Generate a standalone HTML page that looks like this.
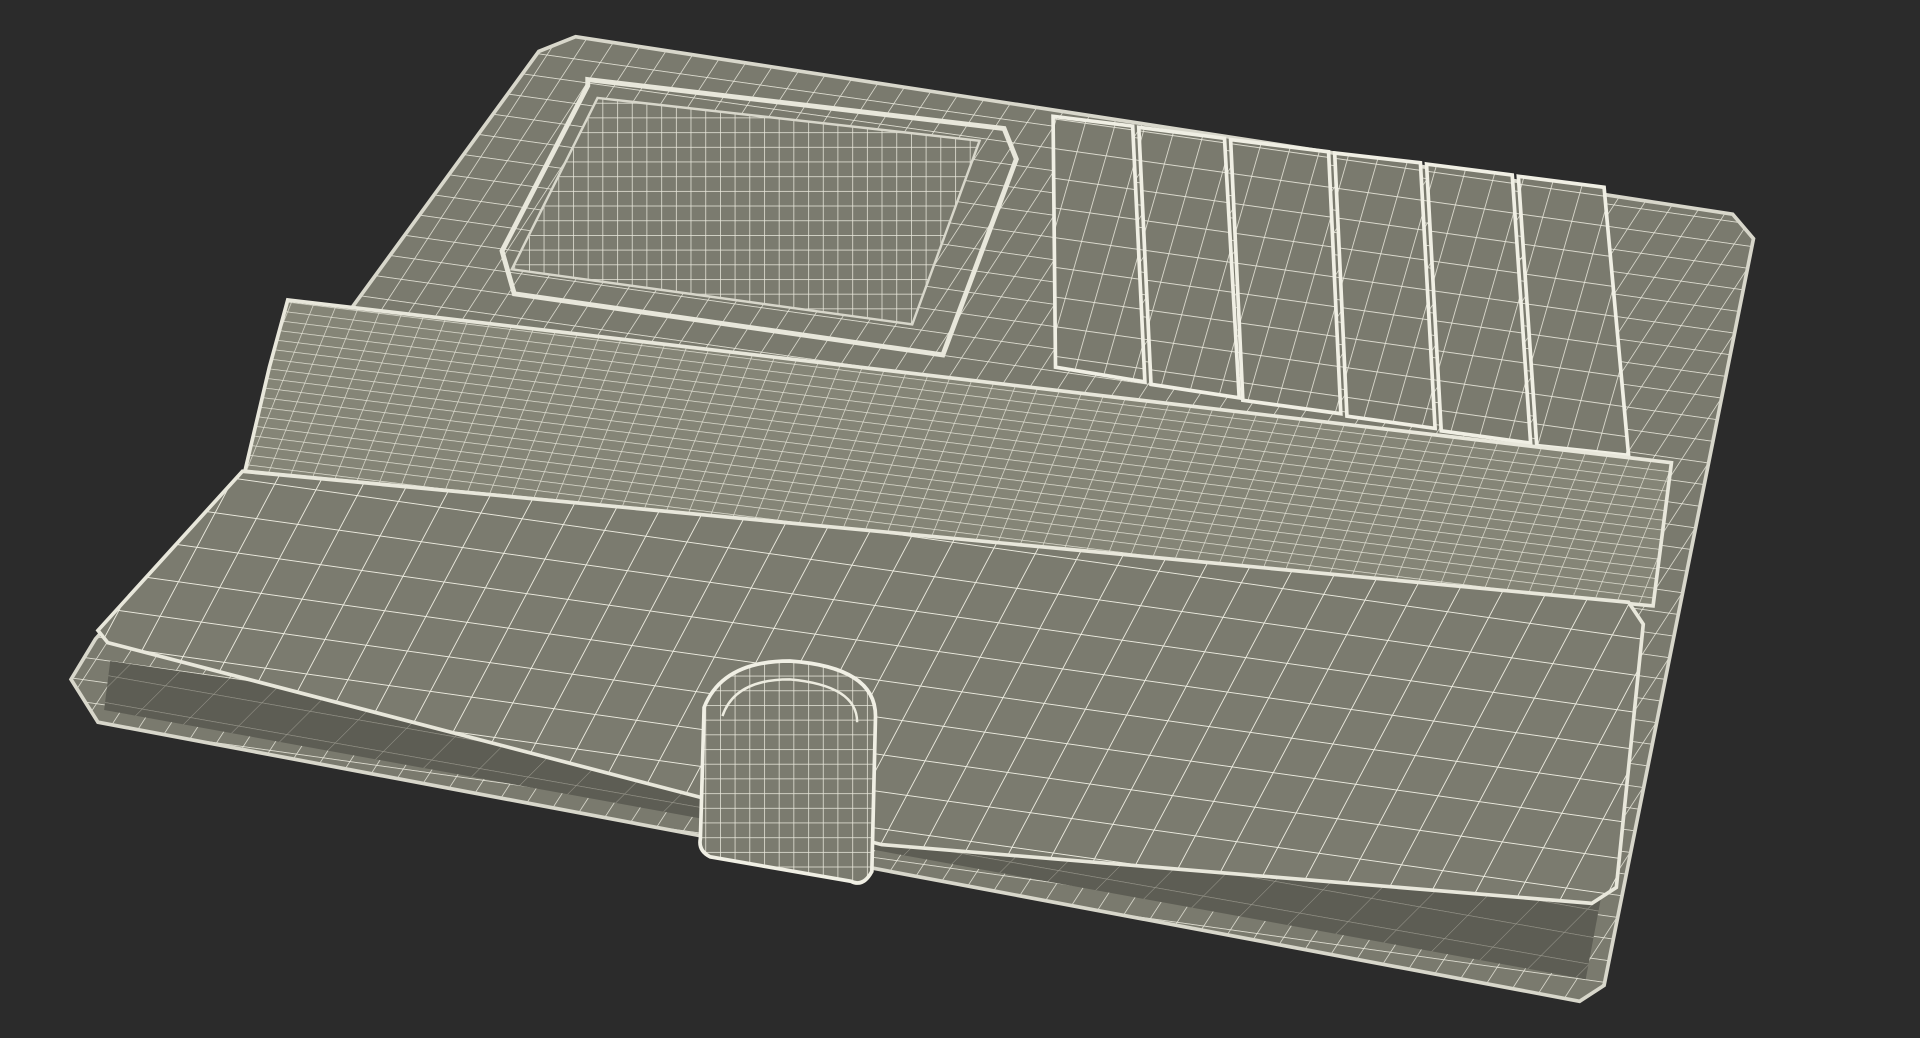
<!DOCTYPE html>
<html><head><style>html,body{margin:0;padding:0;background:#2b2b2b;overflow:hidden}svg{display:block}</style></head>
<body>
<svg width="1920" height="1038" viewBox="0 0 1568 848" preserveAspectRatio="none" xmlns="http://www.w3.org/2000/svg">
<defs>
<pattern id="g1" width="34" height="30" patternUnits="userSpaceOnUse" patternTransform="rotate(8) skewX(-20)">
<rect width="34" height="30" fill="#7b7b6f"/>
<path d="M0 0H34M0 0V30" stroke="#ecebdf" stroke-width="1.6"/>
</pattern>
<pattern id="g2" width="22" height="18" patternUnits="userSpaceOnUse" patternTransform="rotate(8) skewX(-25)">
<rect width="22" height="18" fill="#7a7a6e"/>
<path d="M0 0H22M0 0V18" stroke="#e8e7db" stroke-width="1.3"/>
</pattern>
<pattern id="g6" width="24" height="24" patternUnits="userSpaceOnUse" patternTransform="rotate(8) skewX(-8)">
<rect width="24" height="24" fill="#7a7a6e"/>
<path d="M0 0H24M0 0V24" stroke="#e8e7db" stroke-width="1.3"/>
</pattern>
<pattern id="g3" width="18" height="8" patternUnits="userSpaceOnUse" patternTransform="rotate(7) skewX(-15)">
<rect width="18" height="8" fill="#858577"/>
<path d="M0 0H18M0 0V8" stroke="#e4e3d6" stroke-width="1.1"/>
</pattern>
<pattern id="g4" width="40" height="22" patternUnits="userSpaceOnUse" patternTransform="rotate(10) skewX(-35)">
<rect width="40" height="22" fill="#5d5d54"/>
<path d="M0 0H40M0 0V22" stroke="#9a998e" stroke-width="1"/>
</pattern>
<pattern id="g5" width="12" height="12" patternUnits="userSpaceOnUse">
<rect width="12" height="12" fill="#7b7b6f"/>
<path d="M0 0H12M0 0V12" stroke="#ecebdf" stroke-width="1.2"/>
</pattern>
</defs>
<rect width="1568" height="848" fill="#2b2b2b"/>
<polygon points="470,30 1415,175 1432,195 1310,805 1290,818 80,590 58,555 78,522 200,385 230,330 440,42" fill="url(#g2)" stroke="#d8d7cb" stroke-width="3"/>
<polygon points="90,540 1310,720 1295,800 85,580" fill="url(#g4)"/>
<polygon points="480,65 820,105 830,130 770,290 420,240 410,205 480,70" fill="url(#g2)" stroke="#e8e7db" stroke-width="4"/>
<polygon points="488,80 800,115 745,265 418,220" fill="url(#g5)" stroke="#d8d7cb" stroke-width="2"/>
<g fill="url(#g6)" stroke="#f0efe4" stroke-width="3">
<polygon points="860,95 925,103 935,312 862,300"/>
<polygon points="930,104 1000,113 1012,325 940,314"/>
<polygon points="1005,114 1085,124 1095,338 1015,327"/>
<polygon points="1090,125 1160,133 1172,350 1100,340"/>
<polygon points="1165,134 1235,143 1250,362 1177,352"/>
<polygon points="1240,144 1310,153 1330,372 1255,364"/>
</g>
<polygon points="235,245 1365,378 1350,495 200,385 220,300" fill="url(#g3)" stroke="#e8e7db" stroke-width="3"/>
<polygon points="198,385 1330,492 1342,510 1320,725 1300,738 720,690 88,525 80,515" fill="url(#g1)" stroke="#e8e7db" stroke-width="3"/>
<path d="M575,578 Q590,540 645,540 Q715,545 715,585 L712,712 Q705,725 695,720 L580,700 Q570,695 572,685 Z" fill="url(#g5)" stroke="#f0efe4" stroke-width="3"/>
<path d="M590,585 Q600,555 645,555 Q700,560 700,590" fill="none" stroke="#ecebdf" stroke-width="2"/>
</svg>
</body></html>
